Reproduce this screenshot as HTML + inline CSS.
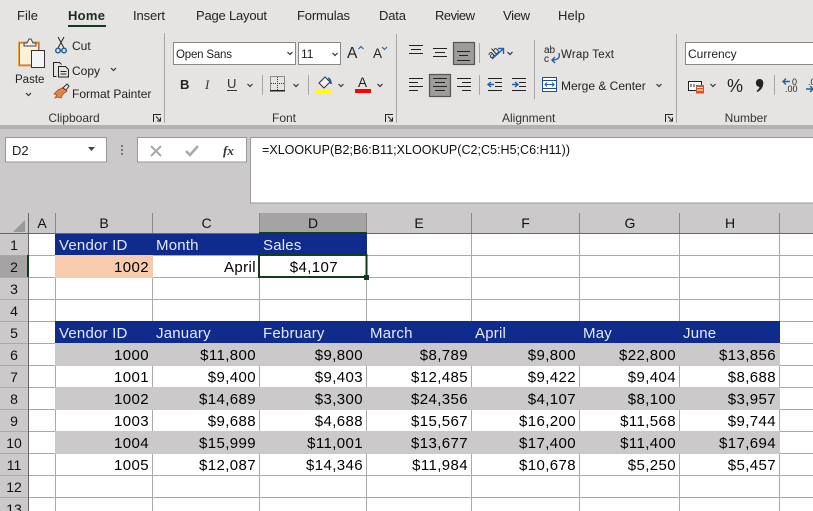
<!DOCTYPE html>
<html><head><meta charset="utf-8"><style>
html,body{margin:0;padding:0;background:#fff;width:813px;height:511px;overflow:hidden}
svg{display:block;font-family:"Liberation Sans",sans-serif}
.t{font-size:12px;fill:#222}
.tb{font-size:13px;fill:#222}
.g{font-size:12px;fill:#333}
.c{font-size:15px;fill:#000;letter-spacing:.4px;text-anchor:end}
.h{font-size:15px;fill:#e6e9ff;letter-spacing:.2px}
.l{font-size:14px;fill:#111;text-anchor:middle}
.ln{fill:none;stroke:#222;stroke-width:1}
.ch{fill:none;stroke:#333;stroke-width:1.2}
.bl{fill:none;stroke:#1f5fa8;stroke-width:1.4}
</style></head><body>
<svg width="813" height="511" viewBox="0 0 813 511" xmlns="http://www.w3.org/2000/svg">
<!-- backgrounds -->
<rect width="813" height="127" fill="#e5e4e2"/>
<rect y="125" width="813" height="4" fill="#b3b1b1"/>
<rect y="129" width="813" height="105" fill="#cbc9c9"/>
<rect y="234" width="813" height="277" fill="#fff"/>
<!-- tabs -->
<text x="17" y="20" class="tb">File</text>
<text x="68" y="20" class="tb" style="font-weight:bold;fill:#1c2a20" textLength="37">Home</text>
<rect x="68" y="25" width="38" height="2" fill="#0f3d1e"/>
<text x="133" y="20" class="tb" textLength="32">Insert</text>
<text x="196" y="20" class="tb" textLength="71">Page Layout</text>
<text x="297" y="20" class="tb" textLength="53">Formulas</text>
<text x="379" y="20" class="tb" textLength="27">Data</text>
<text x="435" y="20" class="tb" textLength="40">Review</text>
<text x="503" y="20" class="tb" textLength="27">View</text>
<text x="558" y="20" class="tb" textLength="27">Help</text>
<!-- group separators -->
<g fill="#a8a6a4"><rect x="164" y="33" width="1" height="90"/><rect x="396" y="34" width="1" height="89"/><rect x="676" y="34" width="1" height="89"/></g>
<!-- clipboard -->
<rect x="19" y="42.500" width="20" height="23" fill="#fbf0d8" stroke="#e8a33d" stroke-width="2"/>
<rect x="19.500" y="43" width="19" height="22" fill="none" stroke="#b5462a" stroke-width=".7"/>
<path d="M24 46v-3h3l2-4h2l2 4h3v3z" fill="#eee" stroke="#444"/>
<rect x="31.500" y="50.500" width="13" height="17" fill="#f5f5f5" stroke="#333"/>
<text x="15" y="83" class="t" style="font-size:11.500px">Paste</text>
<path class="ch" d="M26 93l2.500 2.500 2.500-2.500"/>
<path class="ln" d="M58 37l6 11M64 37l-6 11"/>
<circle cx="58" cy="50.500" r="2.300" fill="none" stroke="#1f5fa8" stroke-width="1.500"/><circle cx="64" cy="50.500" r="2.300" fill="none" stroke="#1f5fa8" stroke-width="1.500"/>
<text x="72" y="50" class="t">Cut</text>
<path class="ln" d="M56.500 76.500h-3v-14h6l2 2M58.500 66.500h7l3 3v7.500h-10z M60.500 71.500h6M60.500 74h6"/>
<text x="72" y="75" class="t">Copy</text>
<path class="ch" d="M111 68l2.500 2.500 2.500-2.500"/>
<path d="M58 90l6-3 3 4-4 3-2 4-3-1-3 1 2-3-3-1z" fill="#e28743" stroke="#b5462a" stroke-width=".8"/>
<path d="M63 88l4-4 2 2-3 4z" fill="#eee" stroke="#333"/>
<text x="72" y="98" class="t">Format Painter</text>
<text x="74" y="122" class="g" text-anchor="middle">Clipboard</text>
<path class="ln" d="M153.500 122v-7.500h7.500M156 116.500l4 4M160.500 117.500v3.500h-3.500" stroke-width=".9"/>
<!-- font -->
<rect x="173.500" y="42.500" width="122" height="22" fill="#fff" stroke="#888"/>
<text x="176" y="58" class="t" style="font-size:11.500px" textLength="56">Open Sans</text>
<path class="ch" d="M287.500 52l2.500 2.500 2.500-2.500"/>
<rect x="298.500" y="42.500" width="42" height="22" fill="#fff" stroke="#888"/>
<text x="301" y="58" class="t">11</text>
<path class="ch" d="M332.500 53l2.500 2.500 2.500-2.500"/>
<text x="347" y="58" style="font-size:15.500px;fill:#222">A</text><path d="M358.500 49l2.500-2.500 2.500 2.500" fill="none" stroke="#1f5fa8" stroke-width="1.100"/>
<text x="373" y="58" style="font-size:13.500px;fill:#222">A</text><path d="M382 47l2.500 2.500 2.500-2.500" fill="none" stroke="#1f5fa8" stroke-width="1.100"/>
<text x="180" y="89" style="font-size:13px;font-weight:bold;fill:#222">B</text>
<text x="205" y="89" style="font-size:13px;font-style:italic;font-family:'Liberation Serif',serif;fill:#333">I</text>
<text x="227" y="88" style="font-size:13px;fill:#333">U</text><rect x="227" y="90" width="10" height="1" fill="#333"/>
<path class="ch" d="M247.500 84l2.500 2.500 2.500-2.500"/>
<rect x="262" y="75" width="1" height="20" fill="#a8a6a4"/>
<rect x="270.500" y="76.500" width="14" height="14" fill="none" stroke="#333" stroke-dasharray="1 1"/><path d="M277.500 77v14M271 83.500h14" stroke="#333" stroke-dasharray="1 1"/><rect x="270" y="90" width="15" height="1.500" fill="#222"/>
<path class="ch" d="M293.500 84l2.500 2.500 2.500-2.500"/>
<rect x="308" y="75" width="1" height="20" fill="#a8a6a4"/>
<path d="M319 83l6-6 5 5-6 6z" fill="#f3f3f3" stroke="#333"/><path d="M328 78c2 1 3 3 3 6" fill="none" stroke="#1f5fa8" stroke-width="1.800"/>
<rect x="316" y="89" width="16" height="4" fill="#ffff00"/>
<path class="ch" d="M338.500 84l2.500 2.500 2.500-2.500"/>
<text x="358" y="87" style="font-size:13.500px;fill:#222">A</text>
<rect x="355" y="89" width="16" height="4" fill="#f00"/>
<path class="ch" d="M377.500 84l2.500 2.500 2.500-2.500"/>
<text x="272" y="122" class="g" textLength="24">Font</text>
<path class="ln" d="M385.500 122v-7.500h7.500M388 116.500l4 4M392.500 117.500v3.500h-3.500" stroke-width=".9"/>
<!-- alignment -->
<path class="ln" d="M409 45.500h14M411 49.500h10M409 53.500h14"/>
<path class="ln" d="M433 48.500h14M435 52.500h10M433 56.500h14"/>
<rect x="453.500" y="42.500" width="21" height="22" fill="#9e9c9a" stroke="#555" stroke-width="1.200"/>
<path class="ln" d="M457 51.500h13M459 55.500h9M457 60.500h13"/>
<rect x="479" y="43" width="1" height="20" fill="#a8a6a4"/>
<text x="487" y="56" transform="rotate(-40 493 52)" style="font-size:10.500px;fill:#222">ab</text><path class="bl" d="M492 59l11-10M498 48.500h5.500v5.500"/>
<path class="ch" d="M507.500 52l2.500 2.500 2.500-2.500"/>
<path class="ln" d="M409 78.500h14M409 82.500h9M409 86.500h14M409 90.500h9"/>
<rect x="429.500" y="74.500" width="21" height="22" fill="#9e9c9a" stroke="#555" stroke-width="1.200"/>
<path class="ln" d="M433 78.500h14M435 82.500h10M433 86.500h14M435 90.500h10"/>
<path class="ln" d="M457 78.500h14M462 82.500h9M457 86.500h14M462 90.500h9"/>
<rect x="479" y="75" width="1" height="20" fill="#a8a6a4"/>
<path class="ln" d="M488 78.500h14M495 82.500h7M495 86.500h7M488 90.500h14"/><path class="bl" d="M488 84.500h6M491 82l-3 2.500 3 2.500"/>
<path class="ln" d="M512 78.500h14M519 82.500h7M519 86.500h7M512 90.500h14"/><path class="bl" d="M512 84.500h6M515 82l3 2.500-3 2.500"/>
<rect x="534" y="40" width="1" height="59" fill="#a8a6a4"/>
<text x="544" y="53" style="font-size:10px;fill:#222">ab</text><text x="544" y="62" style="font-size:10px;fill:#222">c</text>
<path class="bl" d="M559 53c1 4 0 7-7 7M555 57l-3 3 3 3"/>
<text x="561" y="58" class="t" style="font-size:11.500px" textLength="53">Wrap Text</text>
<rect x="542.500" y="77.500" width="14" height="14" fill="#fff" stroke="#1f4f8f"/><path d="M543 80.500h13M543 88.500h13" stroke="#1f4f8f"/><path d="M545 84.500h9M547 82.500l-2 2 2 2M552 82.500l2 2-2 2" fill="none" stroke="#1f5fa8"/>
<text x="561" y="90" class="t">Merge &amp; Center</text>
<path class="ch" d="M656.500 84l2.500 2.500 2.500-2.500"/>
<text x="502" y="122" class="g">Alignment</text>
<path class="ln" d="M665.500 122v-7.500h7.500M668 116.500l4 4M672.500 117.500v3.500h-3.500" stroke-width=".9"/>
<!-- number -->
<rect x="685.500" y="42.500" width="140" height="22" fill="#fff" stroke="#888"/>
<text x="688" y="58" class="t">Currency</text>
<rect x="688.500" y="81.500" width="13" height="9" fill="#fff" stroke="#222"/><path d="M691 84v3M694 84v3" stroke="#222"/><rect x="696" y="85" width="8" height="8.500" fill="#d2552a"/><path d="M697 87.500h6M697 90h6" stroke="#fff"/>
<path class="ch" d="M710.500 84l2.500 2.500 2.500-2.500"/>
<text x="727" y="92" style="font-size:18px;fill:#222">%</text>
<path d="M759.500 79c2.500 0 3.800 1.800 3.800 4 0 4-2.500 7.500-6 9l-.8-1.200c1.600-1 2.800-2.400 3-3.900-2.200 0-3.600-1.800-3.600-4 0-2.200 1.500-3.900 3.600-3.900z" fill="#222"/>
<rect x="774" y="75" width="1" height="20" fill="#a8a6a4"/>
<path class="bl" d="M783 81.500h7M786 78.500l-3 3 3 3"/><text x="785" y="92" style="font-size:9px;fill:#222">.00</text><text x="792" y="85" style="font-size:9px;fill:#222">0</text>
<text x="808" y="85" style="font-size:9px;fill:#222">.0</text><path class="bl" d="M806 89h7M810 86l3 3-3 3"/>
<text x="746" y="122" class="g" text-anchor="middle">Number</text>
<!-- formula bar -->
<rect x="5.500" y="137.500" width="101" height="24.500" fill="#fff" stroke="#999"/>
<text x="12" y="155" class="t" style="font-size:13px">D2</text>
<path d="M88 147h7l-3.500 4z" fill="#444"/>
<g fill="#777"><rect x="121" y="145" width="2" height="2"/><rect x="121" y="149" width="2" height="2"/><rect x="121" y="153" width="2" height="2"/></g>
<rect x="137.500" y="137.500" width="109" height="24.500" fill="#fff" stroke="#999"/>
<path d="M151 146l10 10M161 146l-10 10" stroke="#aaa" stroke-width="2" fill="none"/>
<path d="M186 151l4 4 8-9" stroke="#aaa" stroke-width="2.500" fill="none"/>
<text x="223" y="155" style="font-size:13px;font-weight:bold;font-style:italic;font-family:'Liberation Serif',serif;fill:#333">fx</text>
<rect x="250.500" y="137.500" width="580" height="65.500" fill="#fff" stroke="#999"/>
<text x="262" y="154" class="t" textLength="308" style="font-size:12.500px;fill:#111">=XLOOKUP(B2;B6:B11;XLOOKUP(C2;C5:H5;C6:H11))</text>
<!-- col header highlights -->
<rect x="259" y="213" width="108" height="20" fill="#a5a3a3"/>
<!-- row header bg -->
<rect x="0" y="234" width="28" height="277" fill="#cbc9c9"/>
<rect x="0" y="255" width="28" height="22" fill="#a5a3a3"/>
<!-- gridlines -->
<g fill="#a9a9a9">
<rect x="55" y="234" width="1" height="277"/><rect x="152" y="234" width="1" height="277"/><rect x="259" y="234" width="1" height="277"/><rect x="366" y="234" width="1" height="277"/><rect x="471" y="234" width="1" height="277"/><rect x="579" y="234" width="1" height="277"/><rect x="679" y="234" width="1" height="277"/><rect x="779" y="234" width="1" height="277"/>
<rect x="0" y="255" width="813" height="1"/><rect x="0" y="277" width="813" height="1"/><rect x="0" y="299" width="813" height="1"/><rect x="0" y="321" width="813" height="1"/><rect x="0" y="343" width="813" height="1"/><rect x="0" y="365" width="813" height="1"/><rect x="0" y="387" width="813" height="1"/><rect x="0" y="409" width="813" height="1"/><rect x="0" y="431" width="813" height="1"/><rect x="0" y="453" width="813" height="1"/><rect x="0" y="475" width="813" height="1"/><rect x="0" y="497" width="813" height="1"/>
</g>
<!-- filled ranges -->
<rect x="55" y="233" width="312" height="22" fill="#0f2b8c"/>
<rect x="55" y="255" width="98" height="23" fill="#f8cbad"/>
<rect x="55" y="321" width="725" height="22" fill="#0f2b8c"/>
<rect x="55" y="343" width="725" height="23" fill="#cbc9c9"/>
<rect x="55" y="387" width="725" height="23" fill="#cbc9c9"/>
<rect x="55" y="431" width="725" height="23" fill="#cbc9c9"/>
<!-- header lines -->
<rect x="0" y="233" width="813" height="1" fill="#666"/>
<rect x="28" y="213" width="1" height="298" fill="#666"/>
<g fill="#888"><rect x="55" y="213" width="1" height="20"/><rect x="152" y="213" width="1" height="20"/><rect x="259" y="213" width="1" height="20"/><rect x="366" y="213" width="1" height="20"/><rect x="471" y="213" width="1" height="20"/><rect x="579" y="213" width="1" height="20"/><rect x="679" y="213" width="1" height="20"/><rect x="779" y="213" width="1" height="20"/></g>
<path d="M13 232l12-12v12z" fill="#999"/>
<rect x="259" y="232" width="108" height="2" fill="#0f3d1e"/>
<rect x="27" y="255" width="2" height="22" fill="#0f3d1e"/>
<!-- column letters -->
<g class="l"><text x="42" y="228" class="l">A</text><text x="104" y="228" class="l">B</text><text x="206.500" y="228" class="l">C</text><text x="313" y="228" class="l">D</text><text x="419" y="228" class="l">E</text><text x="525.500" y="228" class="l">F</text><text x="630" y="228" class="l">G</text><text x="730" y="228" class="l">H</text></g>
<!-- row numbers -->
<text x="14" y="250" class="l">1</text><text x="14" y="272" class="l">2</text><text x="14" y="294" class="l">3</text><text x="14" y="316" class="l">4</text><text x="14" y="338" class="l">5</text><text x="14" y="360" class="l">6</text><text x="14" y="382" class="l">7</text><text x="14" y="404" class="l">8</text><text x="14" y="426" class="l">9</text><text x="14" y="448" class="l">10</text><text x="14" y="470" class="l">11</text><text x="14" y="492" class="l">12</text><text x="14" y="514" class="l">13</text>
<!-- cells -->
<text x="59" y="250" class="h">Vendor ID</text><text x="156" y="250" class="h">Month</text><text x="263" y="250" class="h">Sales</text>
<text x="149" y="272" class="c">1002</text><text x="256" y="272" class="c">April</text><text x="338" y="272" class="c">$4,107</text>
<text x="59" y="338" class="h">Vendor ID</text><text x="156" y="338" class="h">January</text><text x="263" y="338" class="h">February</text><text x="370" y="338" class="h">March</text><text x="475" y="338" class="h">April</text><text x="583" y="338" class="h">May</text><text x="683" y="338" class="h">June</text>
<text x="149" y="360" class="c">1000</text><text x="256" y="360" class="c">$11,800</text><text x="363" y="360" class="c">$9,800</text><text x="468" y="360" class="c">$8,789</text><text x="576" y="360" class="c">$9,800</text><text x="676" y="360" class="c">$22,800</text><text x="776" y="360" class="c">$13,856</text>
<text x="149" y="382" class="c">1001</text><text x="256" y="382" class="c">$9,400</text><text x="363" y="382" class="c">$9,403</text><text x="468" y="382" class="c">$12,485</text><text x="576" y="382" class="c">$9,422</text><text x="676" y="382" class="c">$9,404</text><text x="776" y="382" class="c">$8,688</text>
<text x="149" y="404" class="c">1002</text><text x="256" y="404" class="c">$14,689</text><text x="363" y="404" class="c">$3,300</text><text x="468" y="404" class="c">$24,356</text><text x="576" y="404" class="c">$4,107</text><text x="676" y="404" class="c">$8,100</text><text x="776" y="404" class="c">$3,957</text>
<text x="149" y="426" class="c">1003</text><text x="256" y="426" class="c">$9,688</text><text x="363" y="426" class="c">$4,688</text><text x="468" y="426" class="c">$15,567</text><text x="576" y="426" class="c">$16,200</text><text x="676" y="426" class="c">$11,568</text><text x="776" y="426" class="c">$9,744</text>
<text x="149" y="448" class="c">1004</text><text x="256" y="448" class="c">$15,999</text><text x="363" y="448" class="c">$11,001</text><text x="468" y="448" class="c">$13,677</text><text x="576" y="448" class="c">$17,400</text><text x="676" y="448" class="c">$11,400</text><text x="776" y="448" class="c">$17,694</text>
<text x="149" y="470" class="c">1005</text><text x="256" y="470" class="c">$12,087</text><text x="363" y="470" class="c">$14,346</text><text x="468" y="470" class="c">$11,984</text><text x="576" y="470" class="c">$10,678</text><text x="676" y="470" class="c">$5,250</text><text x="776" y="470" class="c">$5,457</text>
<!-- selection -->
<rect x="259" y="255" width="107.500" height="22" fill="none" stroke="#0f3d1e" stroke-width="2"/>
<rect x="364" y="275" width="5" height="5" fill="#0f3d1e"/>
</svg>
</body></html>
